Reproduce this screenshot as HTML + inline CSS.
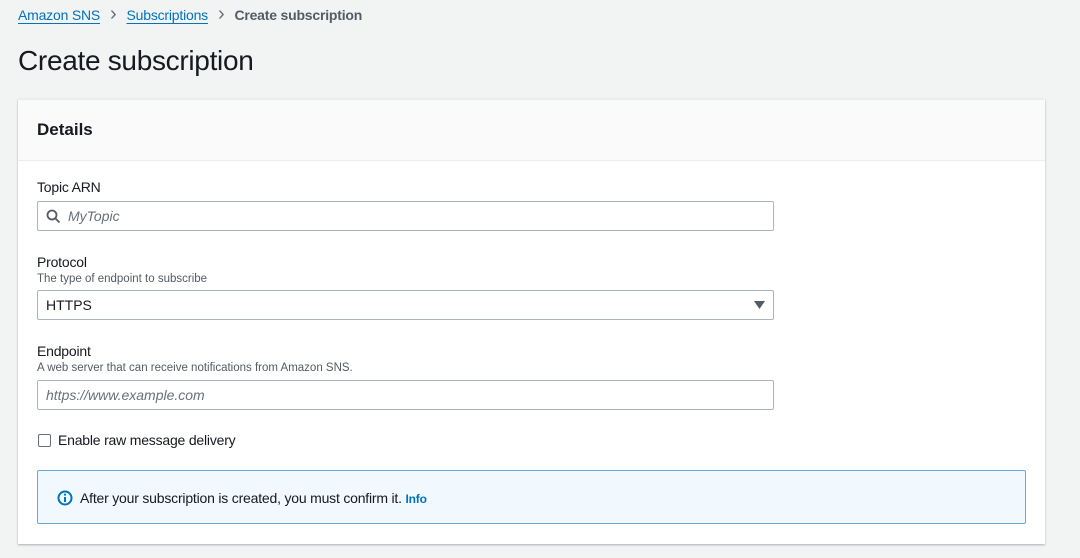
<!DOCTYPE html>
<html><head><style>
body{margin:0;width:1080px;height:558px;background:#f2f3f3;font-family:"Liberation Sans",sans-serif;color:#16191f;position:relative;overflow:hidden}
.a{position:absolute}
.bc{top:7px;left:18px;font-size:14px;letter-spacing:-0.2px}
.bc a{color:#0073bb;text-decoration:underline;text-underline-offset:3px}
.h1{top:45px;left:18px;font-size:28px;color:#16191f;letter-spacing:-0.3px}
.card{left:18px;top:99px;width:1027px;height:444px;background:#fff;box-shadow:0 1px 2px rgba(0,28,36,.3);border-top:1px solid #eaeded}
.hd{left:0;top:0;width:1027px;height:60px;background:#fafafa;border-bottom:1px solid #eaeded}
.lbl{font-size:14px;color:#16191f;letter-spacing:-0.2px}
.desc{font-size:11.5px;color:#545b64}
.in{left:19px;width:735px;height:28px;border:1px solid #aab7b8;border-radius:2px;background:#fff;font-size:14px}
</style></head><body>
<div class="a bc"><a>Amazon SNS</a><span style="color:#687078;margin:0 10px;font-size:20px;line-height:14px">&#x203A;</span><a>Subscriptions</a><span style="color:#687078;margin:0 10px;font-size:20px;line-height:14px">&#x203A;</span><b style="color:#545b64">Create subscription</b></div>
<div class="a h1">Create subscription</div>
<div class="a card">
<div class="a hd"><b class="a" style="left:19px;top:20px;font-size:17px">Details</b></div>
<div class="a lbl" style="left:19px;top:79px">Topic ARN</div>
<div class="a in" style="top:101px"><svg class="a" style="left:8px;top:7px" width="15" height="15" viewBox="0 0 15 15"><circle cx="6" cy="6" r="4.5" fill="none" stroke="#545b64" stroke-width="1.8"/><path d="M9.5 9.5L13.5 13.5" stroke="#545b64" stroke-width="1.8"/></svg><i class="a" style="left:30px;top:6px;color:#687078">MyTopic</i></div>
<div class="a lbl" style="left:19px;top:154px">Protocol</div>
<div class="a desc" style="left:19px;top:173px">The type of endpoint to subscribe</div>
<div class="a in" style="top:190px"><span class="a" style="left:8px;top:6px">HTTPS</span><svg class="a" style="left:716px;top:10px" width="11" height="8"><path d="M0 0H11L5.5 8Z" fill="#545b64"/></svg></div>
<div class="a lbl" style="left:19px;top:243px">Endpoint</div>
<div class="a desc" style="left:19px;top:262px">A web server that can receive notifications from Amazon SNS.</div>
<div class="a in" style="top:280px"><i class="a" style="left:8px;top:6px;color:#687078">https://www.example.com</i></div>
<div class="a" style="left:20px;top:334px;width:11px;height:11px;border:1px solid #687078;border-radius:2px"></div>
<div class="a lbl" style="left:40px;top:332px">Enable raw message delivery</div>
<div class="a" style="left:19px;top:370px;width:987px;height:52px;background:#f1f8fe;border:1px solid #68a8d8;border-radius:2px">
<svg class="a" style="left:19px;top:19px" width="16" height="16" viewBox="0 0 16 16"><circle cx="8" cy="8" r="6.5" fill="none" stroke="#0073bb" stroke-width="2"/><path d="M8 7V12" stroke="#0073bb" stroke-width="2"/><circle cx="8" cy="4.6" r="1.1" fill="#0073bb"/></svg>
<span class="a" style="left:42px;top:19px;font-size:14px;letter-spacing:-0.2px">After your subscription is created, you must confirm it. <b style="color:#0073bb;font-size:12px">Info</b></span></div>
</div>
</body></html>
